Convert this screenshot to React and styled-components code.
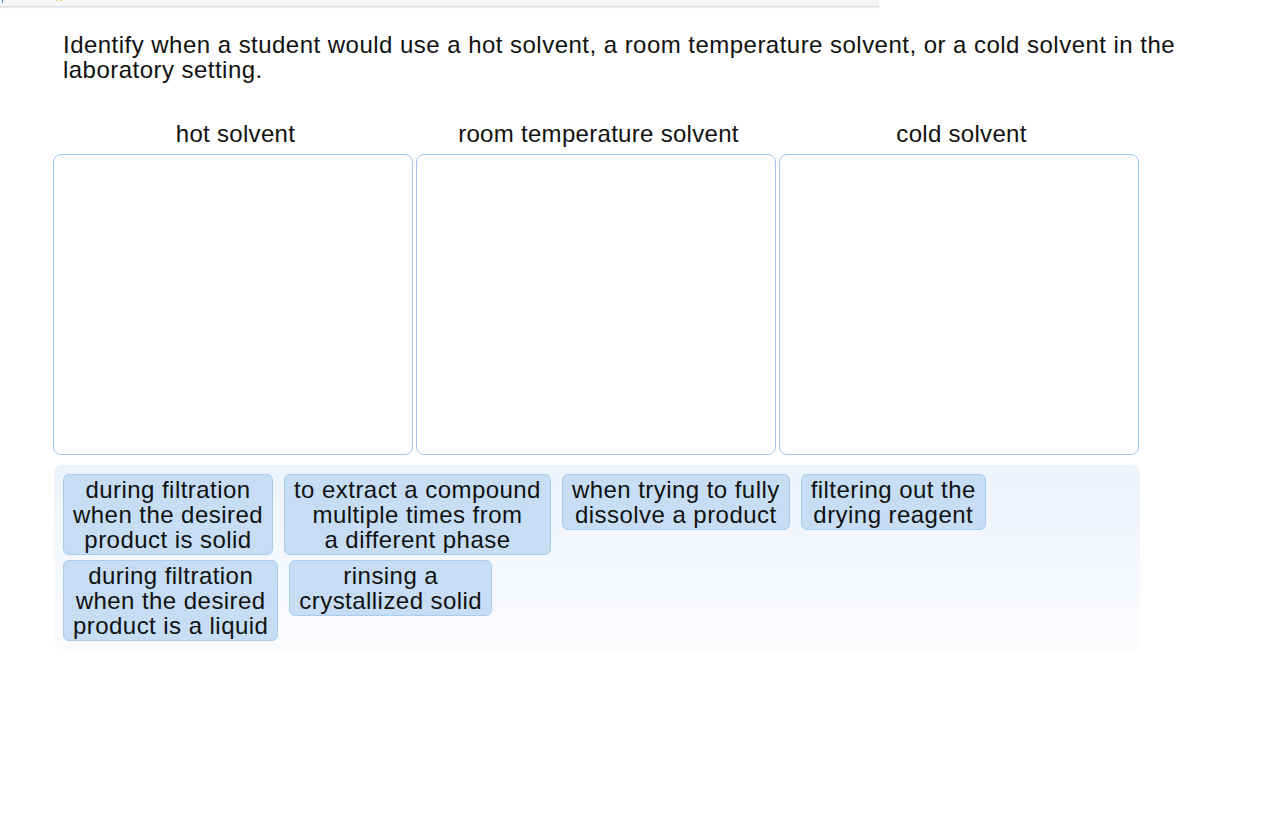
import styled, { createGlobalStyle } from "styled-components";

const categories = ["hot solvent", "room temperature solvent", "cold solvent"];

const tokens = [
  ["during filtration", "when the desired", "product is solid"],
  ["to extract a compound", "multiple times from", "a different phase"],
  ["when trying to fully", "dissolve a product"],
  ["filtering out the", "drying reagent"],
  ["during filtration", "when the desired", "product is a liquid"],
  ["rinsing a", "crystallized solid"],
];

const App = () => {
  return (
    <>
      <GlobalStyle />
      <TopBar>
        <Tick />
        <Star viewBox="0 0 20 20">
          <path d="M10 1l2.6 5.6 6.1.7-4.5 4.1 1.2 6-5.4-3-5.4 3 1.2-6L1.3 7.3l6.1-.7z" fill="#e3c94a" />
        </Star>
      </TopBar>

      <Main>
        <Question>
          Identify when a student would use a hot solvent, a room temperature solvent, or a cold solvent in the
          laboratory setting.
        </Question>

        <Targets>
          {categories.map((c) => (
            <Label key={c}>{c}</Label>
          ))}
          {categories.map((c) => (
            <DropBox key={c + "-box"} />
          ))}
        </Targets>

        <Pool>
          {tokens.map((lines, i) => (
            <Token key={i}>
              {lines.map((l, j) => (
                <Line key={j}>{l}</Line>
              ))}
            </Token>
          ))}
        </Pool>
      </Main>
    </>
  );
};

export default App;

const GlobalStyle = createGlobalStyle`
  body {
    margin: 0;
    background: #fff;
    font-family: "Liberation Sans", Arial, sans-serif;
    color: #111;
  }
`;

// franja gris recortada arriba
const TopBar = styled.div`
  width: 879px;
  height: 6px;
  background: #f5f5f5;
  border-bottom: 1px solid #dcdcdc;
  box-shadow: 0 1px 1px #ededed;
  overflow: hidden;
  display: flex;
  align-items: flex-start;
`;

const Tick = styled.span`
  width: 1px;
  height: 3px;
  margin-left: 2px;
  background: #3a8fd0;
`;

const Star = styled.svg`
  width: 12px;
  height: 12px;
  margin-left: 50px;
  margin-top: -9px;
`;

const Main = styled.div`
  padding-left: 53px;
  padding-top: 25px;
`;

const Question = styled.div`
  max-width: 1170px;
  padding-left: 10px;
  font-size: 24px;
  line-height: 25px;
  letter-spacing: 0.47px;
`;

const Targets = styled.div`
  display: grid;
  grid-template-columns: repeat(3, 360px);
  column-gap: 3px;
  row-gap: 8px;
  margin-top: 39px;
`;

const Label = styled.div`
  text-align: center;
  padding-left: 5px;
  font-size: 24px;
  line-height: 25px;
  letter-spacing: 0.3px;
`;

const DropBox = styled.div`
  height: 299px;
  border: 1px solid #9fc6ee;
  border-radius: 8px;
  background: #fff;
`;

const Pool = styled.div`
  width: 1068px;
  margin: 10px 0 0 1px;
  padding: 9px;
  min-height: 167px;
  border-radius: 8px;
  background: linear-gradient(to bottom, #edf3fb 0%, #fbfcfe 100%);
  display: flex;
  flex-wrap: wrap;
  align-items: flex-start;
  align-content: flex-start;
  gap: 5px 11px;
`;

const Token = styled.div`
  padding: 2px 9px 2px;
  background: #c6ddf4;
  border: 1px solid #a9cdef;
  border-radius: 6px;
  text-align: center;
  font-size: 24px;
  line-height: 25px;
  letter-spacing: 0.45px;
  color: #111;
`;

const Line = styled.div`
  white-space: nowrap;
`;
